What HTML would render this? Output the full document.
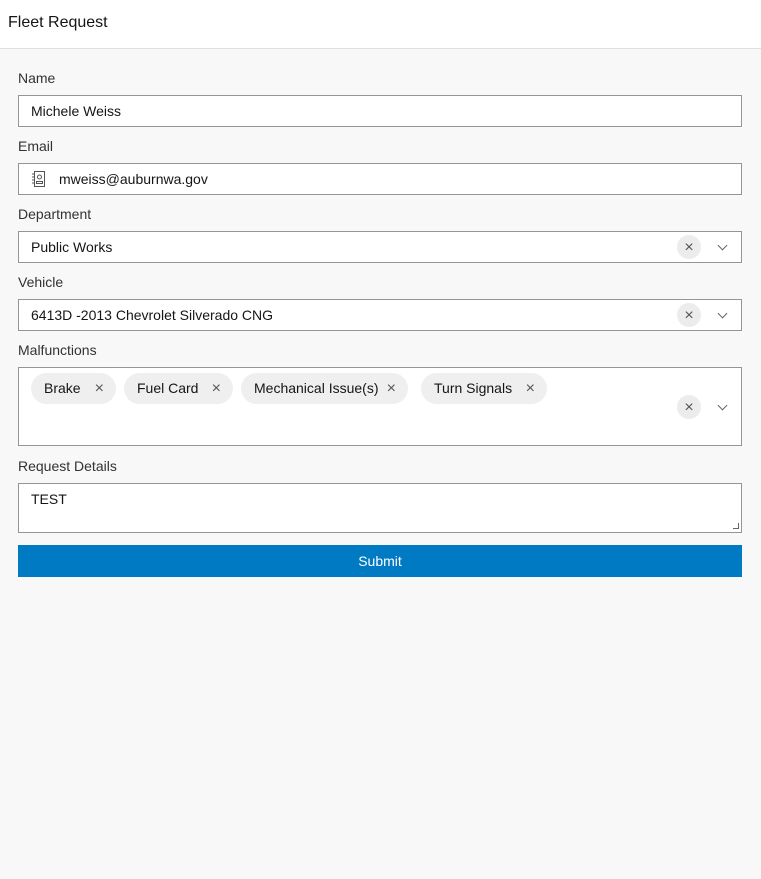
<!DOCTYPE html><html><head><style>
body{margin:0;width:761px;height:879px;background:#f8f8f8;font-family:"Liberation Sans",sans-serif;color:#151515;position:relative;overflow:hidden}
.hd{position:absolute;left:0;top:0;width:761px;height:48px;background:#fff;border-bottom:1px solid #dfdfdf}
.hd span{position:absolute;left:8px;top:14px;font-size:16px}
.lb{position:absolute;left:18px;font-size:14px;color:#323232}
.in{position:absolute;left:18px;width:722px;background:#fff;border:1px solid #959595;font-size:14px}
.in .t{position:absolute;left:12px;top:7px}
.cx{position:absolute;width:24px;height:24px;border-radius:12px;background:#ececec;right:40px}
.cx:after{content:"×";position:absolute;left:0;top:0;width:24px;height:24px;line-height:25px;text-align:center;font-size:16px;color:#555}
.ch{position:absolute;right:15px;width:6px;height:6px;border-right:1px solid #666;border-bottom:1px solid #666;transform:rotate(45deg)}
.chip{position:absolute;top:5px;height:31px;border-radius:16px;background:#efefef;font-size:14px;line-height:31px;padding-left:13px;box-sizing:border-box}
.chip i{position:absolute;right:12px;font-style:normal;color:#555;font-size:16px}
.btn{position:absolute;left:18px;top:545px;width:724px;height:32px;background:#007ac2;color:#fff;text-align:center;line-height:32px;font-size:14px}
</style></head><body>
<div class="hd"><span>Fleet Request</span></div>
<div class="lb" style="top:70px">Name</div>
<div class="in" style="top:95px;height:30px"><span class="t">Michele Weiss</span></div>
<div class="lb" style="top:138px">Email</div>
<div class="in" style="top:163px;height:30px">
<svg style="position:absolute;left:12px;top:7px" width="14" height="16" viewBox="0 0 14 16" fill="none" stroke="#555"><rect x="3.5" y="0.5" width="10" height="15"/><path d="M1 3h3M1 6h3M1 9h3M1 12h3"/><circle cx="8.5" cy="6" r="2"/><path d="M5.5 12.5v-2h6v2z"/></svg>
<span class="t" style="left:40px">mweiss@auburnwa.gov</span></div>
<div class="lb" style="top:206px">Department</div>
<div class="in" style="top:231px;height:30px"><span class="t">Public Works</span><div class="cx" style="top:3px"></div><div class="ch" style="top:10px"></div></div>
<div class="lb" style="top:274px">Vehicle</div>
<div class="in" style="top:299px;height:30px"><span class="t">6413D -2013 Chevrolet Silverado CNG</span><div class="cx" style="top:3px"></div><div class="ch" style="top:10px"></div></div>
<div class="lb" style="top:342px">Malfunctions</div>
<div class="in" style="top:367px;height:77px">
<div class="chip" style="left:12px;width:85px">Brake<i>×</i></div>
<div class="chip" style="left:105px;width:109px">Fuel Card<i>×</i></div>
<div class="chip" style="left:222px;width:167px">Mechanical Issue(s)<i>×</i></div>
<div class="chip" style="left:402px;width:126px">Turn Signals<i>×</i></div>
<div class="cx" style="top:27px"></div><div class="ch" style="top:34px"></div></div>
<div class="lb" style="top:458px">Request Details</div>
<div class="in" style="top:483px;height:48px"><span class="t">TEST</span>
<div style="position:absolute;right:2px;bottom:3px;width:5px;height:5px;border-right:1px solid #666;border-bottom:1px solid #666"></div></div>
<div class="btn">Submit</div>
</body></html>
